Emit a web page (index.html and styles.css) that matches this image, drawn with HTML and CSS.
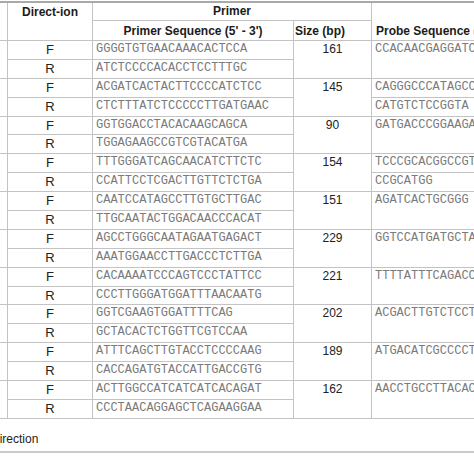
FILE: index.html
```html
<!DOCTYPE html>
<html>
<head>
<meta charset="utf-8">
<link rel="stylesheet" href="styles.css">
</head>
<body>
<div class="page">
  <div class="sheet">
    <div class="grid">
      <div class="c h-left"></div>
      <div class="c h-dir">Direct-ion</div>
      <div class="c h-primer">Primer</div>
      <div class="c h-seq">Primer Sequence (5' - 3')</div>
      <div class="c h-size">Size (bp)</div>
      <div class="c h-probe">Probe Sequence (5' - 3')</div>

      <div class="c left"></div>
      <div class="c dir">F</div>
      <div class="c seq">GGGGTGTGAACAAACACTCCA</div>
      <div class="c size">161</div>
      <div class="c probe span">CCACAACGAGGATCTGCA</div>
      <div class="c dir">R</div>
      <div class="c seq">ATCTCCCCACACCTCCTTTGC</div>

      <div class="c left"></div>
      <div class="c dir">F</div>
      <div class="c seq">ACGATCACTACTTCCCCATCTCC</div>
      <div class="c size">145</div>
      <div class="c probe">CAGGGCCCATAGCCAGCT</div>
      <div class="c dir">R</div>
      <div class="c seq">CTCTTTATCTCCCCCTTGATGAAC</div>
      <div class="c probe">CATGTCTCCGGTA</div>

      <div class="c left"></div>
      <div class="c dir">F</div>
      <div class="c seq">GGTGGACCTACACAAGCAGCA</div>
      <div class="c size">90</div>
      <div class="c probe span">GATGACCCGGAAGAGCTG</div>
      <div class="c dir">R</div>
      <div class="c seq">TGGAGAAGCCGTCGTACATGA</div>

      <div class="c left"></div>
      <div class="c dir">F</div>
      <div class="c seq">TTTGGGATCAGCAACATCTTCTC</div>
      <div class="c size">154</div>
      <div class="c probe">TCCCGCACGGCCGTGATC</div>
      <div class="c dir">R</div>
      <div class="c seq">CCATTCCTCGACTTGTTCTCTGA</div>
      <div class="c probe">CCGCATGG</div>

      <div class="c left"></div>
      <div class="c dir">F</div>
      <div class="c seq">CAATCCATAGCCTTGTGCTTGAC</div>
      <div class="c size">151</div>
      <div class="c probe span">AGATCACTGCGGG</div>
      <div class="c dir">R</div>
      <div class="c seq">TTGCAATACTGGACAACCCACAT</div>

      <div class="c left"></div>
      <div class="c dir">F</div>
      <div class="c seq">AGCCTGGGCAATAGAATGAGACT</div>
      <div class="c size">229</div>
      <div class="c probe span">GGTCCATGATGCTATCCA</div>
      <div class="c dir">R</div>
      <div class="c seq">AAATGGAACCTTGACCCTCTTGA</div>

      <div class="c left"></div>
      <div class="c dir">F</div>
      <div class="c seq">CACAAAATCCCAGTCCCTATTCC</div>
      <div class="c size">221</div>
      <div class="c probe span">TTTTATTTCAGACCTGGA</div>
      <div class="c dir">R</div>
      <div class="c seq">CCCTTGGGATGGATTTAACAATG</div>

      <div class="c left"></div>
      <div class="c dir">F</div>
      <div class="c seq">GGTCGAAGTGGATTTTCAG</div>
      <div class="c size">202</div>
      <div class="c probe span">ACGACTTGTCTCCTGCAA</div>
      <div class="c dir">R</div>
      <div class="c seq">GCTACACTCTGGTTCGTCCAA</div>

      <div class="c left"></div>
      <div class="c dir">F</div>
      <div class="c seq">ATTTCAGCTTGTACCTCCCCAAG</div>
      <div class="c size">189</div>
      <div class="c probe span">ATGACATCGCCCCTTCAG</div>
      <div class="c dir">R</div>
      <div class="c seq">CACCAGATGTACCATTGACCGTG</div>

      <div class="c left"></div>
      <div class="c dir">F</div>
      <div class="c seq">ACTTGGCCATCATCATCACAGAT</div>
      <div class="c size">162</div>
      <div class="c probe span">AACCTGCCTTACACGTCA</div>
      <div class="c dir">R</div>
      <div class="c seq">CCCTAACAGGAGCTCAGAAGGAA</div>
    </div>
    <div class="foot">Direction</div>
  </div>
</div>
</body>
</html>
```

FILE: styles.css
```css
html, body {
  margin: 0;
  padding: 0;
  background: #ffffff;
}

.page {
  width: 474px;
  height: 474px;
  overflow: hidden;
  font-family: "Liberation Sans", Arial, sans-serif;
}

.sheet {
  width: 700px;
  margin-left: -50px;
  margin-top: 1px;
  border-top: 2px solid #a9a9a9;
}

.grid {
  display: grid;
  grid-template-columns: 57px 84px 200px 77px 240px;
  grid-template-rows: 17px 19px;
  grid-auto-rows: 17.9px;
  gap: 1px;
  background: #c3c3c3;
  border-bottom: 1px solid #c3c3c3;
}

.c {
  background: #ffffff;
  white-space: nowrap;
  overflow: hidden;
}

/* header */
.h-left { grid-column: 1; grid-row: 1 / 3; }

.h-dir,
.h-primer,
.h-seq,
.h-size,
.h-probe {
  font-weight: bold;
  font-size: 12px;
  color: #1b1b1b;
}

.h-dir {
  grid-column: 2;
  grid-row: 1 / 3;
  text-align: center;
  line-height: 14px;
  padding-top: 2px;
}

.h-primer {
  grid-column: 3 / 5;
  grid-row: 1;
  text-align: center;
  line-height: 17px;
}

.h-seq {
  grid-column: 3;
  grid-row: 2;
  text-align: center;
  line-height: 17px;
  padding-top: 2px;
}

.h-size {
  grid-column: 4;
  grid-row: 2;
  line-height: 17px;
  padding-top: 2px;
  padding-left: 1px;
}

.h-probe {
  grid-column: 5;
  grid-row: 1 / 3;
  display: flex;
  align-items: flex-end;
  line-height: 17px;
  padding-left: 4px;
}

/* body */
.left {
  grid-column: 1;
  grid-row: span 2;
}

.dir {
  grid-column: 2;
  text-align: center;
  font-size: 13px;
  line-height: 17.9px;
  color: #222222;
}

.seq {
  grid-column: 3;
  font-family: "Liberation Mono", "Courier New", monospace;
  font-size: 12px;
  line-height: 17.9px;
  color: #7a7a7a;
  padding-left: 3px;
}

.size {
  grid-column: 4;
  grid-row: span 2;
  text-align: center;
  font-size: 12px;
  line-height: 17.9px;
  color: #222222;
}

.probe {
  grid-column: 5;
  font-family: "Liberation Mono", "Courier New", monospace;
  font-size: 12px;
  line-height: 17.9px;
  color: #7a7a7a;
  padding-left: 3px;
}

.probe.span {
  grid-row: span 2;
}

.foot {
  padding: 12px 0 4px 41px;
  font-size: 12px;
  line-height: 16px;
  color: #222222;
  border-bottom: 2px solid #cbcbcb;
}
```
